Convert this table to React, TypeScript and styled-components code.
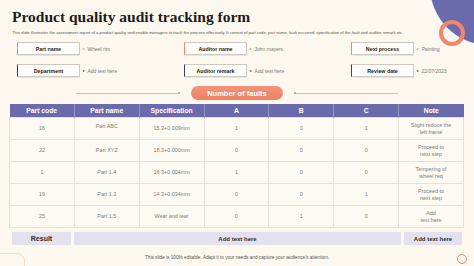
import React from 'react';
import styled, { createGlobalStyle } from 'styled-components';

const PURPLE = '#6b6bab';
const SALMON = '#f0876c';
const NAVY = '#3d3f6e';

const GlobalStyle = createGlobalStyle`
    html, body {
        margin: 0;
        padding: 0;
        background: #fcf8ef;
    }
    #root {
        width: 474px;
        height: 266px;
    }
`;

type FieldItem = { label: string; value: string };

const topFields: FieldItem[] = [
    { label: 'Part name', value: 'Wheel rim' },
    { label: 'Auditor name', value: 'John mayers' },
    { label: 'Next process', value: 'Painting' },
];

const bottomFields: FieldItem[] = [
    { label: 'Department', value: 'Add text here' },
    { label: 'Auditor remark', value: 'Add text here' },
    { label: 'Review date', value: '22/07/2023' },
];

const columns = ['Part code', 'Part name', 'Specification', 'A', 'B', 'C', 'Note'];

const rows = [
    { code: '16', name: 'Part ABC', spec: '15.3+0.009mm', a: '1', b: '0', c: '1', note: ['Slight reduce the', 'left frame'], raised: true },
    { code: '22', name: 'Part XYZ', spec: '18.3+0.000mm', a: '0', b: '0', c: '0', note: ['Proceed to', 'next step'] },
    { code: '1', name: 'Part 1.4', spec: '16.3+0.004mm', a: '1', b: '0', c: '0', note: ['Tempering of', 'wheel req'] },
    { code: '19', name: 'Part 1.3', spec: '14.3+0.034mm', a: '0', b: '0', c: '1', note: ['Proceed to', 'next step'] },
    { code: '25', name: 'Part 1.5', spec: 'Wear and tear', a: '0', b: '1', c: '0', note: ['Add', 'text here'] },
];

const App: React.FC = () => {
    const renderField = (item: FieldItem, accent: string) => (
        <Field key={item.label}>
            <FieldLabel $accent={accent}>{item.label}</FieldLabel>
            <Arrow $accent={accent}>▸</Arrow>
            <FieldValue>{item.value}</FieldValue>
        </Field>
    );

    return (
        <>
            <GlobalStyle />
            <Page>
                <BigCircle />
                <Ring />
                <CornerShape />
                <PageRing />

                <Title>Product quality audit tracking form</Title>
                <Subtitle>
                    This slide illustrates the assessment report of a product quality and enable managers to track the process
                    effectively. It consist of part code, part name, fault occurred, specification of the fault and auditor remark etc.
                </Subtitle>

                <FieldGrid>
                    {topFields.map((item) => renderField(item, SALMON))}
                    {bottomFields.map((item) => renderField(item, NAVY))}
                </FieldGrid>

                <Divider>
                    <Rule $side="left" />
                    <Pill>Number of faults</Pill>
                    <Rule $side="right" />
                </Divider>

                <TableWrap>
                    <Table>
                        <thead>
                            <tr>
                                {columns.map((col) => (
                                    <Th key={col}>{col}</Th>
                                ))}
                            </tr>
                        </thead>
                        <tbody>
                            {rows.map((row, index) => (
                                <Tr key={index}>
                                    <Td>{row.code}</Td>
                                    <Td $raised={row.raised}>{row.name}</Td>
                                    <Td>{row.spec}</Td>
                                    <Td>{row.a}</Td>
                                    <Td>{row.b}</Td>
                                    <Td>{row.c}</Td>
                                    <Td>
                                        {row.note.map((line) => (
                                            <NoteLine key={line}>{line}</NoteLine>
                                        ))}
                                    </Td>
                                </Tr>
                            ))}
                        </tbody>
                    </Table>
                </TableWrap>

                <ResultRow>
                    <ResultCell $width={59} $size={7}>
                        Result
                    </ResultCell>
                    <ResultCell $width={327}>Add text here</ResultCell>
                    <ResultCell $width={58}>Add text here</ResultCell>
                </ResultRow>

                <Footer>This slide is 100% editable. Adapt it to your needs and capture your audience's attention.</Footer>
            </Page>
        </>
    );
};

const Page = styled.div`
    position: relative;
    width: 474px;
    height: 266px;
    overflow: hidden;
    box-sizing: border-box;
    padding-top: 9px;
    background: #fcf8ef;
    font-family: 'Liberation Sans', Arial, sans-serif;
`;

const BigCircle = styled.div`
    position: absolute;
    left: 430px;
    top: -73px;
    width: 118px;
    height: 118px;
    border-radius: 50%;
    background: ${PURPLE};
`;

const Ring = styled.div`
    position: absolute;
    left: 439px;
    top: 20px;
    width: 26px;
    height: 26px;
    box-sizing: border-box;
    border: 4px solid ${SALMON};
    border-radius: 50%;
`;

const CornerShape = styled.div`
    position: absolute;
    left: -8px;
    top: 253px;
    width: 33px;
    height: 20px;
    box-sizing: border-box;
    border: 1px solid #ecdccd;
    border-radius: 8px;
`;

const PageRing = styled.div`
    position: absolute;
    left: 457px;
    top: 254px;
    width: 10px;
    height: 10px;
    box-sizing: border-box;
    border: 1.4px solid ${SALMON};
    border-radius: 50%;
`;

const Title = styled.h1`
    position: relative;
    margin: 0 0 0 12px;
    font-family: 'Liberation Serif', 'Times New Roman', serif;
    font-weight: 700;
    font-size: 15.5px;
    line-height: 15.5px;
    color: #1c1c1c;
`;

const Subtitle = styled.p`
    margin: 5px 0 0 12px;
    font-size: 4.15px;
    line-height: 5px;
    color: #555;
    white-space: nowrap;
`;

const FieldGrid = styled.div`
    display: grid;
    grid-template-columns: repeat(3, 167px);
    row-gap: 9px;
    margin-top: 7.5px;
    padding-left: 17px;
`;

const Field = styled.div`
    display: flex;
    align-items: center;
    height: 13px;
`;

const FieldLabel = styled.div<{ $accent: string }>`
    display: flex;
    align-items: center;
    justify-content: center;
    width: 63px;
    height: 13px;
    box-sizing: border-box;
    border: 1px solid #cdc8c0;
    border-left: 1.5px solid ${(props) => props.$accent};
    background: #fffdf9;
    box-shadow: 0 0.5px 1px rgba(0, 0, 0, 0.08);
    font-weight: 700;
    font-size: 5.3px;
    color: #222;
`;

const Arrow = styled.span<{ $accent: string }>`
    margin-left: 2.5px;
    font-size: 3.5px;
    color: ${(props) => props.$accent};
`;

const FieldValue = styled.span`
    margin-left: 3px;
    font-size: 5px;
    color: #777;
`;

const Divider = styled.div`
    display: flex;
    align-items: center;
    justify-content: center;
    gap: 11px;
    height: 14px;
    margin-top: 9px;
`;

const Rule = styled.div<{ $side: 'left' | 'right' }>`
    position: relative;
    width: 104px;
    height: 0.7px;
    background: #c8c3ba;

    &::after {
        content: '';
        position: absolute;
        top: -0.8px;
        ${(props) => (props.$side === 'left' ? 'right: 0;' : 'left: 0;')}
        width: 2.2px;
        height: 2.2px;
        border-radius: 50%;
        background: #a9a39a;
    }
`;

const Pill = styled.div`
    display: flex;
    align-items: center;
    justify-content: center;
    width: 92px;
    height: 14px;
    border-radius: 7px;
    background: linear-gradient(180deg, #f3937a 0%, #ee8063 100%);
    color: #fff;
    font-weight: 700;
    font-size: 7.5px;
`;

const TableWrap = styled.div`
    margin: 4px 10px 0 9px;
`;

const Table = styled.table`
    width: 100%;
    table-layout: fixed;
    border-collapse: collapse;
`;

const Th = styled.th`
    height: 13px;
    padding: 0;
    background: ${PURPLE};
    color: #fff;
    font-weight: 700;
    font-size: 6.8px;
    text-align: center;
    border-left: 1px solid rgba(255, 255, 255, 0.28);

    &:first-child {
        border-left: none;
    }
`;

const Tr = styled.tr`
    height: 22px;
`;

const Td = styled.td<{ $raised?: boolean }>`
    padding: ${(props) => (props.$raised ? '0 0 5px' : '0')};
    border: 1px solid #e6e1d6;
    background: #fdfaf3;
    color: #7a7a7a;
    font-size: 5.4px;
    line-height: 6.5px;
    text-align: center;
    vertical-align: middle;
`;

const NoteLine = styled.div`
    white-space: nowrap;
`;

const ResultRow = styled.div`
    display: flex;
    gap: 3px;
    height: 13px;
    margin: 4px 0 0 12px;
`;

const ResultCell = styled.div<{ $width: number; $size?: number }>`
    display: flex;
    align-items: center;
    justify-content: center;
    width: ${(props) => props.$width}px;
    background: #e2e1ed;
    color: #2c2c2c;
    font-weight: 700;
    font-size: ${(props) => props.$size ?? 6}px;
`;

const Footer = styled.div`
    margin-top: 9.5px;
    text-align: center;
    font-size: 4.7px;
    line-height: 5px;
    color: #555;
`;

export default App;
